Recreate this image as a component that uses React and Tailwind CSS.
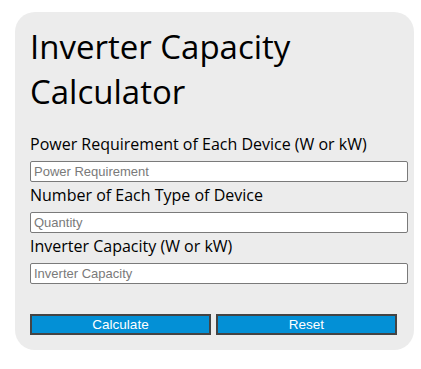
export default function App() {
  const fields = [
    { label: "Power Requirement of Each Device (W or kW)", ph: "Power Requirement" },
    { label: "Number of Each Type of Device", ph: "Quantity" },
    { label: "Inverter Capacity (W or kW)", ph: "Inverter Capacity" },
  ];

  return (
    <div className="min-h-[369px] bg-white pt-[12px] pl-[15px]" style={{ fontFamily: '"Open Sans", sans-serif' }}>
      <div className="w-[399px] h-[338px] rounded-[20px] bg-[#ececec] px-[15px] pt-[12px]">
        <h1 className="text-[33px] leading-[45px] text-black">Inverter Capacity Calculator</h1>

        <div className="mt-[17px]">
          {fields.map((f) => (
            <div key={f.ph}>
              <label className="block text-[16px] leading-[26px] text-black">{f.label}</label>
              <input
                type="text"
                placeholder={f.ph}
                className="mt-[4px] block w-[378px] h-[21px] border border-[#7a7a7a] rounded-[2px] bg-white px-[3px] text-[13px] text-black placeholder:text-[#7a7a7a]"
                style={{ fontFamily: '"Liberation Sans", Arial, sans-serif' }}
              />
            </div>
          ))}
        </div>

        <div className="mt-[30px] flex gap-[5px]" style={{ fontFamily: '"Liberation Sans", Arial, sans-serif' }}>
          <button className="w-[181px] h-[21px] bg-[#0390d6] border-2 border-[#444] text-white text-[13.5px] leading-none">
            Calculate
          </button>
          <button className="w-[181px] h-[21px] bg-[#0390d6] border-2 border-[#444] text-white text-[13.5px] leading-none">
            Reset
          </button>
        </div>
      </div>
    </div>
  );
}
